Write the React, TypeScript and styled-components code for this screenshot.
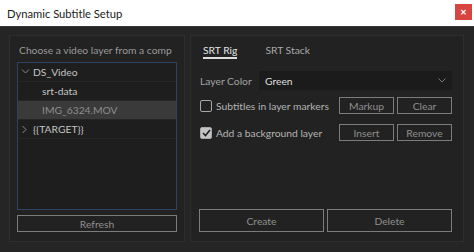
import styled, { createGlobalStyle } from 'styled-components'

const GlobalStyle = createGlobalStyle`
  html, body {
    margin: 0;
    padding: 0;
    background: #252525;
  }
  body {
    font-family: Lato, 'Noto Sans', sans-serif;
  }
`

const TEXT = '10.3px'

const Window = styled.div`
  width: 474px;
  height: 252px;
  display: flex;
  flex-direction: column;
  background: #252525;
  overflow: hidden;
`

const TitleBar = styled.div`
  height: 27px;
  flex-shrink: 0;
  background: #ffffff;
  border-bottom: 1px solid #3a3a3a;
  display: flex;
  align-items: center;
  justify-content: space-between;
  padding: 0 2px 0 7px;
  box-sizing: border-box;
`

const Title = styled.span`
  font-size: 11.2px;
  color: #1a1a1a;
`

const CloseButton = styled.div`
  width: 17px;
  height: 16px;
  margin-top: -3px;
  background: #d64541;
  color: #fff;
  font-size: 11px;
  font-weight: bold;
  display: flex;
  align-items: center;
  justify-content: center;
  line-height: 1;
`

const Body = styled.div`
  flex: 1;
  min-height: 0;
  display: flex;
  gap: 5px;
  padding: 8px 10px 10px 9px;
  box-sizing: border-box;
`

const Panel = styled.div<{ $width?: number }>`
  ${(p) => (p.$width ? `width: ${p.$width}px; flex-shrink: 0;` : 'flex: 1;')}
  background: #222222;
  border: 1px solid #2e2e2e;
  box-sizing: border-box;
  display: flex;
  flex-direction: column;
`

const LeftInner = styled.div`
  flex: 1;
  display: flex;
  flex-direction: column;
  padding: 7px 7px 9px 7px;
`

const Heading = styled.div`
  font-size: ${TEXT};
  color: #9a9a9a;
  line-height: 14px;
  padding-left: 2px;
  margin-bottom: 5px;
  white-space: nowrap;
`

const Tree = styled.div`
  height: 148px;
  flex-shrink: 0;
  border: 1px solid #2a4561;
  background: #1e1e1e;
  box-sizing: border-box;
  display: flex;
  flex-direction: column;
`

const TreeRow = styled.div<{ $indent: number; $selected?: boolean }>`
  height: 18px;
  border-bottom: 1px solid #262626;
  display: flex;
  align-items: center;
  padding-left: ${(p) => p.$indent}px;
  font-size: ${TEXT};
  color: ${(p) => (p.$selected ? '#8e8e8e' : '#c4c4c4')};
  background: ${(p) => (p.$selected ? '#3a3a3a' : 'transparent')};
  position: relative;
`

const Caret = styled.svg`
  position: absolute;
  left: 3px;
  top: 5px;
`

const OutlineButton = styled.div<{ $height?: number }>`
  height: ${(p) => p.$height ?? 17}px;
  flex-shrink: 0;
  border: 1px solid #7c7c7c;
  box-sizing: border-box;
  display: flex;
  align-items: center;
  justify-content: center;
  font-size: ${TEXT};
  color: #8f8f8f;
  background: #222;
`

const RefreshButton = styled(OutlineButton)`
  margin-top: 5px;
`

const RightInner = styled.div`
  flex: 1;
  display: flex;
  flex-direction: column;
  padding: 7px 11px 9px 8px;
`

const Tabs = styled.div`
  display: flex;
  gap: 28px;
  padding-left: 4px;
  height: 16px;
`

const Tab = styled.div<{ $active?: boolean }>`
  font-size: ${TEXT};
  line-height: 14px;
  color: ${(p) => (p.$active ? '#e2e2e2' : '#a8a8a8')};
  padding-bottom: 1px;
  border-bottom: 2px solid ${(p) => (p.$active ? '#dcdcdc' : 'transparent')};
  height: 13px;
`

const Row = styled.div`
  display: flex;
  align-items: center;
  height: 19px;
`

const ColorRow = styled(Row)`
  margin-top: 12px;
`

const Label = styled.span`
  font-size: ${TEXT};
  color: #a4a4a4;
  width: 59px;
  padding-left: 1px;
  white-space: nowrap;
`

const Select = styled.div`
  flex: 1;
  height: 19px;
  background: #1b1b1b;
  display: flex;
  align-items: center;
  justify-content: space-between;
  padding: 0 6px 0 6px;
  font-size: ${TEXT};
  color: #dedede;
  box-sizing: border-box;
`

const OptionRow = styled(Row)<{ $gap: number }>`
  margin-top: ${(p) => p.$gap}px;
  height: 17px;
`

const Check = styled.div<{ $checked?: boolean }>`
  width: 12px;
  height: 12px;
  box-sizing: border-box;
  border: 1.5px solid #a8a8a8;
  border-radius: 2px;
  margin-left: 1px;
  background: ${(p) => (p.$checked ? '#c4c4c4' : 'transparent')};
  display: flex;
  align-items: center;
  justify-content: center;
`

const OptionText = styled.span`
  font-size: ${TEXT};
  color: #b4b4b4;
  margin-left: 4px;
  flex: 1;
  min-width: 0;
  white-space: nowrap;
`

const SmallButtons = styled.div`
  display: flex;
  gap: 3px;
`

const SmallButton = styled(OutlineButton)`
  width: 55px;
`

const BottomButtons = styled.div`
  margin-top: auto;
  display: flex;
  gap: 3px;
`

const BigButton = styled(OutlineButton)`
  flex: 1;
`

const ChevronDown = () => (
  <Caret width="9" height="7" viewBox="0 0 9 7">
    <path d="M1 1.5 L4.5 5 L8 1.5" fill="none" stroke="#8a8a8a" strokeWidth="1" />
  </Caret>
)

const ChevronRight = () => (
  <Caret width="7" height="9" viewBox="0 0 7 9">
    <path d="M1.5 1 L5 4.5 L1.5 8" fill="none" stroke="#8a8a8a" strokeWidth="1" />
  </Caret>
)

const App = () => {
  return (
    <Window>
      <GlobalStyle />
      <TitleBar>
        <Title>Dynamic Subtitle Setup</Title>
        <CloseButton>×</CloseButton>
      </TitleBar>
      <Body>
        <Panel $width={176}>
          <LeftInner>
            <Heading>Choose a video layer from a comp</Heading>
            <Tree>
              <TreeRow $indent={15}>
                <ChevronDown />
                DS_Video
              </TreeRow>
              <TreeRow $indent={24}>srt-data</TreeRow>
              <TreeRow $indent={24} $selected>
                IMG_6324.MOV
              </TreeRow>
              <TreeRow $indent={15}>
                <ChevronRight />
                {'{{TARGET}}'}
              </TreeRow>
            </Tree>
            <RefreshButton>Refresh</RefreshButton>
          </LeftInner>
        </Panel>
        <Panel>
          <RightInner>
            <Tabs>
              <Tab $active>SRT Rig</Tab>
              <Tab>SRT Stack</Tab>
            </Tabs>
            <ColorRow>
              <Label>Layer Color</Label>
              <Select>
                Green
                <svg width="8" height="5" viewBox="0 0 8 5">
                  <path d="M0.5 0.5 L4 4 L7.5 0.5" fill="none" stroke="#777" strokeWidth="1" />
                </svg>
              </Select>
            </ColorRow>
            <OptionRow $gap={7}>
              <Check />
              <OptionText>Subtitles in layer markers</OptionText>
              <SmallButtons>
                <SmallButton>Markup</SmallButton>
                <SmallButton>Clear</SmallButton>
              </SmallButtons>
            </OptionRow>
            <OptionRow $gap={10}>
              <Check $checked>
                <svg width="9" height="8" viewBox="0 0 9 8">
                  <path d="M1 4 L3.5 6.5 L8 1" fill="none" stroke="#1e1e1e" strokeWidth="1.6" />
                </svg>
              </Check>
              <OptionText>Add a background layer</OptionText>
              <SmallButtons>
                <SmallButton>Insert</SmallButton>
                <SmallButton>Remove</SmallButton>
              </SmallButtons>
            </OptionRow>
            <BottomButtons>
              <BigButton $height={23}>Create</BigButton>
              <BigButton $height={23}>Delete</BigButton>
            </BottomButtons>
          </RightInner>
        </Panel>
      </Body>
    </Window>
  )
}

export default App
